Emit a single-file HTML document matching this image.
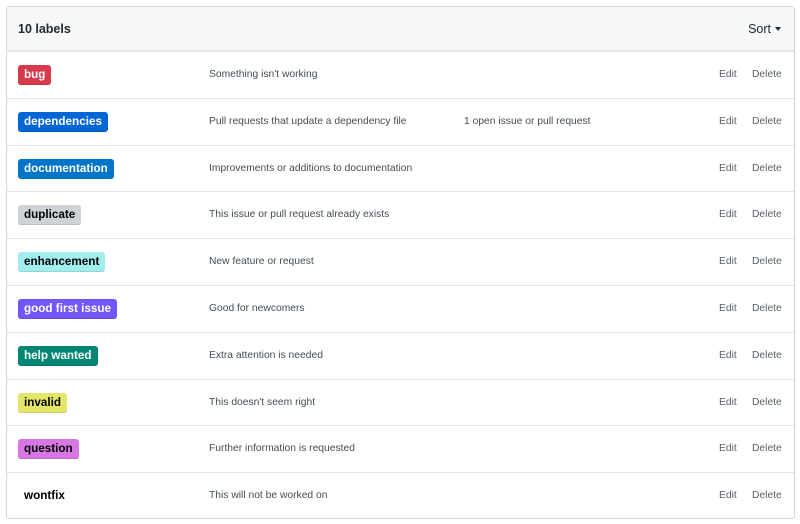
<!DOCTYPE html>
<html><head><style>
*{box-sizing:border-box;margin:0;padding:0}
body{width:800px;height:524px;background:#fff;font-family:"Liberation Sans",sans-serif;position:relative;overflow:hidden}
.box{position:absolute;left:6px;top:6px;width:789px;height:513px;border:1px solid #d1d5da;border-radius:3px}
.hd{height:44px;background:#f6f8fa;border-bottom:1px solid #e1e4e8;position:relative}
.hd b{position:absolute;left:11px;top:15px;font-size:12.5px;color:#24292e}
.sort{position:absolute;right:13px;top:15px;font-size:12.5px;color:#24292e}
.sort:after{content:"";display:inline-block;margin-left:4px;border:3.5px solid transparent;border-top:4px solid #24292e;vertical-align:-1px}
.row{height:46.8px;border-top:1px solid #e1e4e8;position:relative}
.row:first-of-type{border-top:none}
.lab{position:absolute;left:11px;top:13px;height:20px;line-height:20px;padding:0 6px;font-size:11.7px;font-weight:bold;border-radius:3px;box-shadow:inset 0 -1px 0 rgba(27,31,35,.12)}
.d{position:absolute;left:202px;top:17px;font-size:10.3px;color:#444d56}
.i{position:absolute;left:457px;top:17px;font-size:10.3px;color:#444d56}
.e{position:absolute;left:712px;top:17px;font-size:10.3px;color:#586069}
.x{position:absolute;left:745px;top:17px;font-size:10.3px;color:#586069}
</style></head><body>
<div class="box">
<div class="hd"><b>10 labels</b><span class="sort">Sort</span></div>
<div class="row"><span class="lab" style="background:#d73a4a;color:#fff">bug</span><span class="d">Something isn't working</span><span class="e">Edit</span><span class="x">Delete</span></div>
<div class="row"><span class="lab" style="background:#0366d6;color:#fff">dependencies</span><span class="d">Pull requests that update a dependency file</span><span class="i">1 open issue or pull request</span><span class="e">Edit</span><span class="x">Delete</span></div>
<div class="row"><span class="lab" style="background:#0075ca;color:#fff">documentation</span><span class="d">Improvements or additions to documentation</span><span class="e">Edit</span><span class="x">Delete</span></div>
<div class="row"><span class="lab" style="background:#cfd3d7;color:#000">duplicate</span><span class="d">This issue or pull request already exists</span><span class="e">Edit</span><span class="x">Delete</span></div>
<div class="row"><span class="lab" style="background:#a2eeef;color:#000">enhancement</span><span class="d">New feature or request</span><span class="e">Edit</span><span class="x">Delete</span></div>
<div class="row"><span class="lab" style="background:#7057ff;color:#fff">good first issue</span><span class="d">Good for newcomers</span><span class="e">Edit</span><span class="x">Delete</span></div>
<div class="row"><span class="lab" style="background:#008672;color:#fff">help wanted</span><span class="d">Extra attention is needed</span><span class="e">Edit</span><span class="x">Delete</span></div>
<div class="row"><span class="lab" style="background:#e4e669;color:#000">invalid</span><span class="d">This doesn't seem right</span><span class="e">Edit</span><span class="x">Delete</span></div>
<div class="row"><span class="lab" style="background:#d876e3;color:#000">question</span><span class="d">Further information is requested</span><span class="e">Edit</span><span class="x">Delete</span></div>
<div class="row"><span class="lab" style="background:#fff;color:#000;box-shadow:none">wontfix</span><span class="d">This will not be worked on</span><span class="e">Edit</span><span class="x">Delete</span></div>
</div>
</body></html>
